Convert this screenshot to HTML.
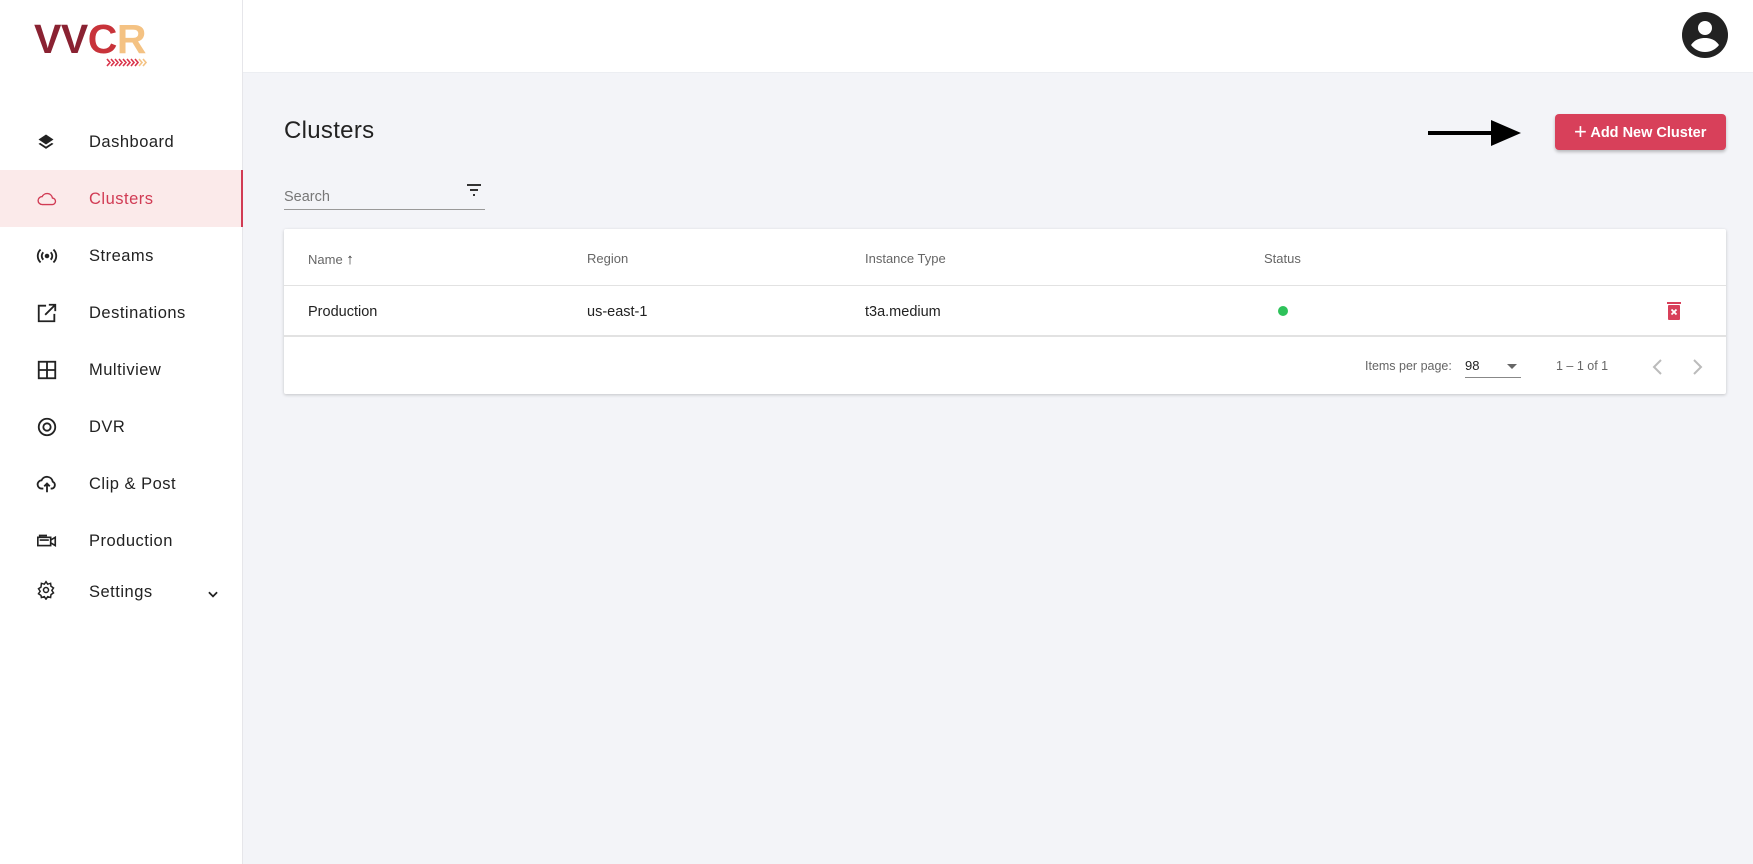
<!DOCTYPE html>
<html><head><meta charset="utf-8"><style>
*{box-sizing:border-box;margin:0;padding:0}
body{width:1753px;height:864px;background:#f3f4f8;font-family:"Liberation Sans",sans-serif;position:relative;overflow:hidden;color:#222}
.abs{position:absolute}
#side{left:0;top:0;width:243px;height:864px;background:#fff;border-right:1px solid #e6e6ea}
#top{left:243px;top:0;width:1510px;height:73px;background:#fff;border-bottom:1px solid #eceef2}
.nav{position:absolute;left:0;width:243px;height:57px;display:flex;align-items:center;font-size:16.5px;letter-spacing:.5px;color:#222}
.nav svg{position:absolute;left:36px}
.nav span{position:absolute;left:89px;top:20px}
.act{background:#fbeaea;color:#d13b54;border-right:2px solid #d13b54}
.th{position:absolute;top:251px;font-size:13px;color:#666}
.td{position:absolute;top:304px;font-size:14.5px;color:#222}
</style></head><body>
<div id="side" class="abs">
  <div class="abs" style="left:34px;top:17px;font-size:41px;font-weight:bold;letter-spacing:-0.5px;line-height:44px">
    <span style="color:#8a2232">VV</span><span style="color:#c8333a">C</span><span style="color:#f4c283">R</span>
  </div>
  <svg class="abs" style="left:106px;top:58px" width="42" height="9" viewBox="0 0 42 9" fill="none" stroke-width="1.6">
    <g stroke="#d9344a"><path d="M1 1l3 3.5-3 3.5M5 1l3 3.5-3 3.5M9 1l3 3.5-3 3.5M13 1l3 3.5-3 3.5M17 1l3 3.5-3 3.5M21 1l3 3.5-3 3.5M25 1l3 3.5-3 3.5M29 1l3 3.5-3 3.5"/></g>
    <g stroke="#f4c283"><path d="M33 1l3 3.5-3 3.5M37 1l3 3.5-3 3.5"/></g>
  </svg>

  <div class="nav" style="top:113px"><svg width="20" height="20" viewBox="0 0 24 24"><path fill="#222" d="M12 3 3 9l9 6 9-6zM5 13l-2 1.3 9 6 9-6L19 13l-7 4.6z"/></svg><span>Dashboard</span></div>
  <div class="nav act" style="top:170px"><svg width="22" height="22" viewBox="0 0 24 24"><path fill="none" stroke="#d13b54" stroke-width="1.5" d="M6.5 18h11a3.5 3.5 0 0 0 .5-7 6 6 0 0 0-11.3-1.6A4.3 4.3 0 0 0 6.5 18z"/></svg><span>Clusters</span></div>
  <div class="nav" style="top:227px"><svg width="22" height="22" viewBox="0 0 24 24" fill="none" stroke="#222" stroke-width="2"><circle cx="12" cy="12" r="1.5" fill="#222"/><path d="M8 8a5.5 5.5 0 0 0 0 8M16 8a5.5 5.5 0 0 1 0 8M5 5a9.5 9.5 0 0 0 0 14M19 5a9.5 9.5 0 0 1 0 14"/></svg><span>Streams</span></div>
  <div class="nav" style="top:284px"><svg width="22" height="22" viewBox="0 0 24 24" fill="none" stroke="#222" stroke-width="2"><path d="M11 4H3v17h17v-8M14 3h7v7M21 3 10 14"/></svg><span>Destinations</span></div>
  <div class="nav" style="top:341px"><svg width="22" height="22" viewBox="0 0 24 24" fill="none" stroke="#222" stroke-width="2"><rect x="3" y="3" width="18" height="18"/><path d="M12 3v18M3 12h18"/></svg><span>Multiview</span></div>
  <div class="nav" style="top:398px"><svg width="22" height="22" viewBox="0 0 24 24" fill="none" stroke="#222" stroke-width="2"><circle cx="12" cy="12" r="9"/><circle cx="12" cy="12" r="4"/></svg><span>DVR</span></div>
  <div class="nav" style="top:455px"><svg width="22" height="22" viewBox="0 0 24 24" fill="none" stroke="#222" stroke-width="2"><path d="M8 17H6.5A4.5 4.5 0 0 1 6 8a6.5 6.5 0 0 1 12.3 1.5A4 4 0 0 1 17.5 17H16M12 21v-9M9 14.5 12 11.5l3 3"/></svg><span>Clip &amp; Post</span></div>
  <div class="nav" style="top:512px"><svg width="22" height="22" viewBox="0 0 24 24" fill="none" stroke="#222" stroke-width="1.8"><rect x="2" y="8" width="14" height="9"/><path d="M4 11h10M16 11l5-3v9l-5-3M4 8V6h8"/></svg><span>Production</span></div>
  <div class="nav" style="top:563px"><svg style="top:17px" width="20" height="20" viewBox="0 0 24 24" fill="none" stroke="#222" stroke-width="1.8"><circle cx="12" cy="12" r="3"/><path d="M12 2l2 3 3.5-1 .5 3.5 3 2-2 3 2 3-3 2-.5 3.5-3.5-1-2 3-2-3-3.5 1L6 18.5l-3-2 2-3-2-3 3-2L6.5 4 10 5z"/></svg><span>Settings</span><svg style="left:206px;top:24px" width="14" height="14" viewBox="0 0 24 24"><path fill="none" stroke="#222" stroke-width="3" d="M5 9l7 7 7-7"/></svg></div>
</div>
<div id="top" class="abs"></div>
<svg class="abs" style="left:1681px;top:11px" width="48" height="48" viewBox="0 0 48 48"><circle cx="24" cy="24" r="23" fill="#222"/><circle cx="24" cy="17" r="7" fill="#fff"/><path d="M10 34c4-6 10-7 14-7s10 1 14 7c-3 4-8 7-14 7s-11-3-14-7z" fill="#fff"/></svg>

<div class="abs" style="left:284px;top:117px;font-size:24px;color:#222;letter-spacing:.3px">Clusters</div>
<div class="abs" style="left:284px;top:189px;font-size:14.5px;color:#777">Search</div>
<div class="abs" style="left:284px;top:209px;width:201px;height:1px;background:#999"></div>
<svg class="abs" style="left:465px;top:182px" width="18" height="16" viewBox="0 0 18 16"><path d="M2 3h14M5 8h8M8 13h2" stroke="#333" stroke-width="2"/></svg>

<svg class="abs" style="left:1428px;top:117px" width="95" height="32" viewBox="0 0 95 32"><path d="M0 16h65" stroke="#000" stroke-width="4"/><path d="M63 3l30 13-30 13z" fill="#000"/></svg>
<div class="abs" style="left:1555px;top:114px;width:171px;height:36px;background:#d8405a;border-radius:4px;box-shadow:0 2px 3px rgba(0,0,0,.25);color:#fff;font-weight:bold;font-size:14.5px;line-height:36px;padding-left:19px"><span style="font-size:22px;font-weight:normal;vertical-align:-2px">+</span> Add New Cluster</div>

<div class="abs" style="left:284px;top:229px;width:1442px;height:165px;background:#fff;box-shadow:0 1px 3px rgba(0,0,0,.2);border-radius:2px"></div>
<div class="abs" style="left:284px;top:285px;width:1442px;height:1px;background:#e2e2e2"></div>
<div class="abs" style="left:284px;top:335px;width:1442px;height:2px;background:#e2e2e2"></div>
<div class="th" style="left:308px">Name <span style="font-size:15px;color:#333">↑</span></div>
<div class="th" style="left:587px">Region</div>
<div class="th" style="left:865px">Instance Type</div>
<div class="th" style="left:1264px">Status</div>
<div class="td" style="left:308px">Production</div>
<div class="td" style="left:587px">us-east-1</div>
<div class="td" style="left:865px">t3a.medium</div>
<div class="abs" style="left:1278px;top:306px;width:10px;height:10px;border-radius:50%;background:#2ec25a"></div>
<svg class="abs" style="left:1666px;top:301px" width="16" height="20" viewBox="0 0 16 20"><rect x="1" y="1" width="14" height="2" fill="#d8405a"/><rect x="2" y="4" width="12" height="15" rx="1" fill="#d8405a"/><path d="M5.5 8.5l5 5M10.5 8.5l-5 5" stroke="#fff" stroke-width="1.8"/></svg>
<div class="abs" style="left:1365px;top:359px;font-size:12.5px;color:#666">Items per page:</div>
<div class="abs" style="left:1465px;top:358px;font-size:13px;color:#222">98</div>
<div class="abs" style="left:1465px;top:377px;width:56px;height:1px;background:#888"></div>
<div class="abs" style="left:1507px;top:364px;width:0;height:0;border-left:5px solid transparent;border-right:5px solid transparent;border-top:5px solid #666"></div>
<div class="abs" style="left:1556px;top:359px;font-size:12.5px;color:#666">1 – 1 of 1</div>
<svg class="abs" style="left:1651px;top:358px" width="14" height="18" viewBox="0 0 14 18"><path d="M10 2 3 9l7 7" fill="none" stroke="#bbb" stroke-width="2"/></svg>
<svg class="abs" style="left:1690px;top:358px" width="14" height="18" viewBox="0 0 14 18"><path d="M4 2l7 7-7 7" fill="none" stroke="#bbb" stroke-width="2"/></svg>
</body></html>
